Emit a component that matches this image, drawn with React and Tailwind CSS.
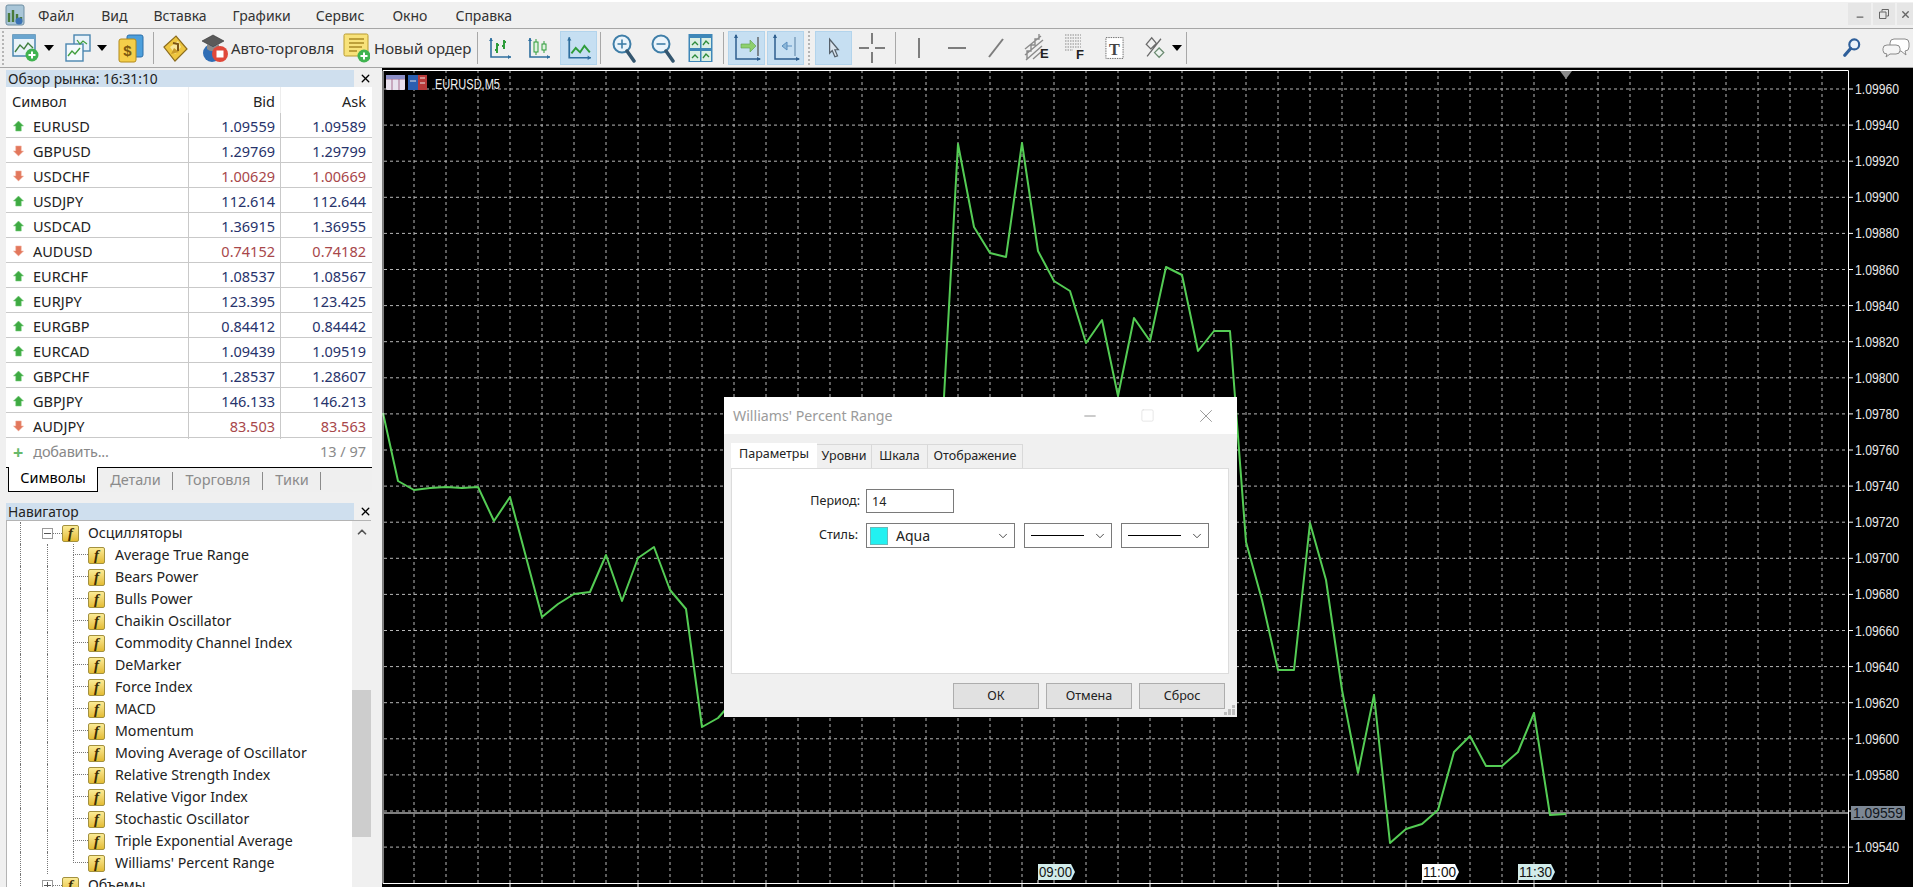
import React from 'react';
import { ChevronDown, ChevronUp, Minus, Square, X } from 'lucide-react';

const FONT = 'font-["Noto_Sans",sans-serif]';

const menuItems = [
  { label: 'Файл', cls: 'ml-[13px]' },
  { label: 'Вид', cls: 'ml-[27px]' },
  { label: 'Вставка', cls: 'ml-[26px]' },
  { label: 'Графики', cls: 'ml-[26px]' },
  { label: 'Сервис', cls: 'ml-[25px]' },
  { label: 'Окно', cls: 'ml-[28px]' },
  { label: 'Справка', cls: 'ml-[28px]' },
];

const quotes = [
  ['EURUSD', '1.09559', '1.09589', 'up', false],
  ['GBPUSD', '1.29769', '1.29799', 'down', false],
  ['USDCHF', '1.00629', '1.00669', 'down', true],
  ['USDJPY', '112.614', '112.644', 'up', false],
  ['USDCAD', '1.36915', '1.36955', 'up', false],
  ['AUDUSD', '0.74152', '0.74182', 'down', true],
  ['EURCHF', '1.08537', '1.08567', 'up', false],
  ['EURJPY', '123.395', '123.425', 'up', false],
  ['EURGBP', '0.84412', '0.84442', 'up', false],
  ['EURCAD', '1.09439', '1.09519', 'up', false],
  ['GBPCHF', '1.28537', '1.28607', 'up', false],
  ['GBPJPY', '146.133', '146.213', 'up', false],
  ['AUDJPY', '83.503', '83.563', 'down', true],
];

const indicators = [
  'Average True Range',
  'Bears Power',
  'Bulls Power',
  'Chaikin Oscillator',
  'Commodity Channel Index',
  'DeMarker',
  'Force Index',
  'MACD',
  'Momentum',
  'Moving Average of Oscillator',
  'Relative Strength Index',
  'Relative Vigor Index',
  'Stochastic Oscillator',
  'Triple Exponential Average',
  "Williams' Percent Range",
];

const pricePoints =
  '383,413 398,481 414,490 430,488 446,487 462,488 478,487 494,521 510,497 526,557 542,617 558,604 574,594 590,592 606,555 622,601 638,558 654,547 670,590 686,609 702,727 718,718 734,700 944,397 958,144 974,227 990,253 1006,257 1022,143 1038,251 1054,281 1070,291 1086,343 1102,320 1118,396 1134,318 1150,341 1166,267 1182,275 1198,351 1214,331 1230,331 1246,542 1262,600 1278,670 1294,670 1310,523 1326,580 1342,690 1358,773 1374,695 1390,843 1406,829 1422,824 1438,810 1454,752 1470,736 1486,766 1502,766 1518,752 1534,713 1550,815 1566,814';

const gridX = Array.from({ length: 45 }, (_, i) => 414 + i * 32);
const priceLabels = Array.from({ length: 22 }, (_, i) => ({
  y: 89 + i * 36.1,
  text: (1.0996 - i * 0.0002).toFixed(5),
}));
const bottomTicks = [510, 638, 766, 894, 1022, 1150, 1278, 1406, 1534, 1662, 1790];

const Axes = ({ children }) => (
  <svg viewBox="0 0 24 24" className="w-full h-full">
    <path d="M3 2v19h20" fill="none" stroke="#2f6f9f" strokeWidth="1.6" />
    <path d="M1 5l2-3 2 3zM20 19l3 2-3 2z" fill="#2f6f9f" />
    {children}
  </svg>
);

const NewChartIcon = () => (
  <svg viewBox="0 0 27 28" className="w-[27px] h-[28px]">
    <rect x="1" y="1" width="22" height="21" fill="#e9f2f9" stroke="#4a86b0" strokeWidth="1.5" />
    <rect x="1" y="1" width="22" height="4" fill="#6aa5cf" />
    <path d="M3 18l5-7 4 4 4-6 5 5" fill="none" stroke="#3f7f3f" strokeWidth="1.4" />
    <circle cx="20" cy="21" r="6.5" fill="#3fb34f" />
    <path d="M20 17.5v7M16.5 21h7" stroke="#fff" strokeWidth="2" />
  </svg>
);

const ProfilesIcon = () => (
  <svg viewBox="0 0 26 28" className="w-[26px] h-[28px]">
    <rect x="9" y="1" width="16" height="16" fill="#e9f2f9" stroke="#4a86b0" strokeWidth="1.4" />
    <rect x="1" y="10" width="17" height="17" fill="#f4f9fc" stroke="#4a86b0" strokeWidth="1.4" />
    <path d="M3 22l4-5 3 3 5-6" fill="none" stroke="#3f9f3f" strokeWidth="1.4" />
    <path d="M12 6l3 4 3-3 4 3" fill="none" stroke="#3f9f3f" strokeWidth="1.2" />
  </svg>
);

const MarketIcon = () => (
  <svg viewBox="0 0 26 30" className="w-[26px] h-[30px]">
    <rect x="9" y="2" width="16" height="22" rx="2" fill="#4c9fdc" stroke="#2c6fa8" />
    <rect x="1" y="6" width="17" height="23" rx="2" fill="#f5cf4a" stroke="#b38a1a" />
    <text x="9.5" y="23" textAnchor="middle" fontSize="15" fontFamily="Liberation Sans, sans-serif" fontWeight="700" fill="#7d5a10">$</text>
  </svg>
);

const EditorIcon = () => (
  <svg viewBox="0 0 27 28" className="w-[27px] h-[28px]">
    <path d="M2 13L14 2l11 13-12 12z" fill="#eec640" stroke="#8d6d1e" strokeWidth="1.2" />
    <path d="M8 13l8-6 3 6-6 7z" fill="#f8e69a" />
    <path d="M11 9l5 1v7" fill="none" stroke="#7b5414" strokeWidth="2" />
    <path d="M9 20l3-6 5 4" fill="#c99a2a" />
  </svg>
);

const AutoTradeIcon = () => (
  <svg viewBox="0 0 27 30" className="w-[27px] h-[30px]">
    <circle cx="11" cy="20" r="9" fill="#2f6db5" />
    <path d="M1 8l11-6 11 6-11 6z" fill="#5a5a5a" stroke="#333" strokeWidth="0.6" />
    <path d="M6 11v5c3 3 9 3 12 0v-5l-6 3z" fill="#8a8a8a" />
    <circle cx="19" cy="21" r="8" fill="#e0483a" />
    <rect x="15.5" y="17.5" width="7" height="7" fill="#fff" />
  </svg>
);

const NewOrderIcon = () => (
  <svg viewBox="0 0 27 30" className="w-[27px] h-[30px]">
    <rect x="1" y="1" width="24" height="22" rx="1.5" fill="#f8e27a" stroke="#b89a2e" />
    <path d="M6 6h15M6 10h15M6 14h13M6 18h8" stroke="#a98a26" strokeWidth="1.4" />
    <circle cx="21" cy="23" r="6.5" fill="#3fb34f" />
    <path d="M21 19.5v7M17.5 23h7" stroke="#fff" strokeWidth="2" />
  </svg>
);

const BarsIcon = () => (
  <Axes>
    <path d="M9 7v10M7 14h2M9 9h2M16 4v9M14 10h2M16 6h2" fill="none" stroke="#2e9c3a" strokeWidth="2" />
  </Axes>
);

const CandlesIcon = () => (
  <Axes>
    <rect x="7" y="6" width="4" height="10" fill="#dff3df" stroke="#2e9c3a" />
    <rect x="15" y="8" width="4" height="6" fill="#dff3df" stroke="#2e9c3a" />
    <path d="M9 3v3M9 16v3M17 5v3M17 14v3" stroke="#2e9c3a" />
  </Axes>
);

const LineIcon = () => (
  <Axes>
    <path d="M5 17l4-5 4 4 4-6 5 6" fill="none" stroke="#2e9c3a" strokeWidth="1.8" />
  </Axes>
);

const LensIcon = ({ plus }) => (
  <svg viewBox="0 0 25 30" className="w-[25px] h-[30px]">
    <circle cx="10" cy="11" r="8.5" fill="#eaf4fb" stroke="#3f7ea8" strokeWidth="2" />
    <path d="M15 18l7 10" stroke="#34566f" strokeWidth="3.5" strokeLinecap="round" />
    <path d="M5.5 11h9" stroke="#3f7ea8" strokeWidth="1.6" />
    {plus && <path d="M10 6.5v9" stroke="#3f7ea8" strokeWidth="1.6" />}
  </svg>
);

const TileIcon = () => (
  <svg viewBox="0 0 25 30" className="w-[25px] h-[30px]">
    <rect x="0.5" y="1" width="24" height="28" fill="#3f87b8" />
    <rect x="2" y="5" width="10" height="10" fill="#dcefe4" />
    <rect x="13.5" y="5" width="9.5" height="10" fill="#dcefe4" />
    <rect x="2" y="18" width="10" height="10" fill="#dcefe4" />
    <rect x="13.5" y="18" width="9.5" height="10" fill="#dcefe4" />
    <path d="M4 12l3-3 3 3M15 12l3-4 3 3M4 25l3-3 3 3M15 25l3-4 3 3" fill="none" stroke="#2e8c3a" strokeWidth="1.3" />
  </svg>
);

const ScrollIcon = ({ shift }) => (
  <svg viewBox="0 0 30 30" className="w-[30px] h-[30px]">
    <path d="M4 2v24h24" fill="none" stroke="#2f5f8f" strokeWidth="1.5" />
    <path d="M2 5l2-4 2 4zM25 24l4 2-4 2z" fill="#2f5f8f" />
    {shift ? (
      <>
        <path d="M24 4v19" stroke="#6a8fb0" strokeWidth="1.2" />
        <path d="M21 13h-5M16 9l-5 4 5 4z" fill="#8db8d8" stroke="#5a8fc0" />
      </>
    ) : (
      <>
        <path d="M26 4v19" stroke="#4a4a4a" strokeWidth="1.2" />
        <path d="M9 11h9v-4l6 6-6 6v-4H9z" fill="#8ed06e" stroke="#5fa04a" strokeWidth="0.6" />
      </>
    )}
  </svg>
);

const CursorIcon = () => (
  <svg viewBox="0 0 16 24" className="w-[14px] h-[22px]">
    <path d="M3 2l10 12-4 0 3 7-3 1-3-7-3 3z" fill="#d9e4ee" stroke="#55606a" strokeWidth="1.4" />
  </svg>
);

const CrossIcon = () => (
  <svg viewBox="0 0 26 30" className="w-[26px] h-[30px]">
    <path d="M13 0v11M13 19v11M0 15h10M16 15h10" stroke="#7d7d7d" strokeWidth="2" />
  </svg>
);

const FibIcon = () => (
  <svg viewBox="0 0 26 30" className="w-[26px] h-[30px]">
    <path d="M3 26V18h4v-6h4V6h4V1M1 16l16-13M1 22L19 7M2 27L18 13M9 26l8-7" fill="none" stroke="#8b8b8b" strokeWidth="1.4" />
    <text x="16" y="25" fontSize="13" fontWeight="700" fontFamily="Liberation Sans, sans-serif" fill="#222">E</text>
  </svg>
);

const FiboGridIcon = () => (
  <svg viewBox="0 0 22 30" className="w-[22px] h-[30px]">
    <path d="M1 2h16M1 5h16M1 8h16M1 11h16M1 14h16M1 17h8" stroke="#8a8a8a" strokeDasharray="1.5 1" />
    <text x="12" y="26" fontSize="13" fontWeight="700" fontFamily="Liberation Sans, sans-serif" fill="#222">F</text>
  </svg>
);

const TextToolIcon = () => (
  <svg viewBox="0 0 20 26" className="w-[19px] h-[26px]">
    <rect x="1" y="2" width="18" height="22" fill="#fff" stroke="#6a6a6a" strokeDasharray="1.5 1" />
    <text x="10" y="20" textAnchor="middle" fontSize="17" fontWeight="700" fontFamily="Liberation Serif, serif" fill="#444">T</text>
  </svg>
);

const ShapesIcon = () => (
  <svg viewBox="0 0 22 26" className="w-[21px] h-[24px]">
    <path d="M2 9l6-7 5 6-6 6zM3 22L18 3" fill="none" stroke="#6a6a6a" strokeWidth="1.4" />
    <path d="M11 18l5-5 5 5-5 5z" fill="#eef4f0" stroke="#6a8a70" strokeWidth="1.4" />
  </svg>
);

const Caret = ({ cls }) => (
  <span className={`w-0 h-0 border-x-[5px] border-x-transparent border-t-[6px] border-t-black ${cls}`} />
);

const Sep = ({ cls }) => <span className={`w-px h-[32px] bg-[#a8a8a8] ${cls}`} />;

const Grip = ({ cls }) => <span className={`w-[2px] h-[34px] border-l-2 border-dotted border-[#b5b5b5] ${cls}`} />;

const ActiveBtn = ({ cls, children }) => (
  <span className={`w-[37px] h-[34px] bg-[#c6dff2] border border-[#b3d4ec] flex items-center justify-center ${cls}`}>
    {children}
  </span>
);

const Toolbar = () => (
  <div className="h-[40px] shrink-0 flex items-center bg-[#f0f0f0] border-y border-[#a6a6a6] text-[15px] text-[#333]">
    <Grip cls="ml-[2px]" />
    <span className="ml-[8px] flex"><NewChartIcon /></span>
    <Caret cls="ml-[5px]" />
    <span className="ml-[11px] flex"><ProfilesIcon /></span>
    <Caret cls="ml-[6px]" />
    <span className="ml-[11px] flex"><MarketIcon /></span>
    <Sep cls="ml-[9px]" />
    <span className="ml-[8px] flex"><EditorIcon /></span>
    <span className="ml-[12px] flex"><AutoTradeIcon /></span>
    <span className="ml-[3px] w-[112px] tracking-[-0.1px] whitespace-nowrap">Авто-торговля</span>
    <span className="flex"><NewOrderIcon /></span>
    <span className="ml-[4px] w-[101px] whitespace-nowrap">Новый ордер</span>
    <Sep cls="ml-[2px]" />
    <span className="ml-[10px] w-[24px] h-[24px]"><BarsIcon /></span>
    <span className="ml-[15px] w-[24px] h-[24px]"><CandlesIcon /></span>
    <ActiveBtn cls="ml-[9px]"><span className="w-[26px] h-[26px]"><LineIcon /></span></ActiveBtn>
    <Sep cls="ml-[3px]" />
    <span className="ml-[11px] flex"><LensIcon plus /></span>
    <span className="ml-[14px] flex"><LensIcon /></span>
    <span className="ml-[12px] flex"><TileIcon /></span>
    <Sep cls="ml-[10px]" />
    <ActiveBtn cls="ml-[4px]"><ScrollIcon /></ActiveBtn>
    <ActiveBtn cls="ml-[2px]"><ScrollIcon shift /></ActiveBtn>
    <Grip cls="ml-[4px]" />
    <ActiveBtn cls="ml-[5px]"><CursorIcon /></ActiveBtn>
    <span className="ml-[7px] flex"><CrossIcon /></span>
    <Sep cls="ml-[10px]" />
    <span className="ml-[22px] w-[2px] h-[20px] bg-[#7d7d7d]" />
    <span className="ml-[28px] w-[18px] h-[2px] bg-[#7d7d7d]" />
    <svg viewBox="0 0 16 20" className="ml-[22px] w-[16px] h-[20px]">
      <path d="M1 19L15 1" stroke="#7d7d7d" strokeWidth="2" />
    </svg>
    <span className="ml-[20px] flex"><FibIcon /></span>
    <span className="ml-[14px] flex"><FiboGridIcon /></span>
    <span className="ml-[19px] flex"><TextToolIcon /></span>
    <span className="ml-[20px] flex"><ShapesIcon /></span>
    <Caret cls="ml-[7px]" />
    <Sep cls="ml-[4px]" />
    <svg viewBox="0 0 20 22" className="ml-auto w-[18px] h-[20px]">
      <circle cx="12.5" cy="7" r="5.5" fill="#eaf2fa" stroke="#2e5f9a" strokeWidth="2.4" />
      <path d="M8.5 11.5L2 19" stroke="#2e5f9a" strokeWidth="3.6" strokeLinecap="round" />
    </svg>
    <svg viewBox="0 0 28 22" className="ml-[21px] mr-[3px] w-[28px] h-[22px]">
      <path d="M12 2h11q4 0 4 4v4q0 4-4 4l1 4-5-4h-7q-4 0-4-4V6q0-4 4-4z" fill="#fff" stroke="#8a8a8a" />
      <path d="M5 8h9q4 0 4 3.500v2q0 3.500-4 3.500H8l-4 3 1-3q-4 0-4-3.500v-2Q1 8 5 8z" fill="#f5f5f5" stroke="#8a8a8a" />
    </svg>
  </div>
);

const MenuBar = () => (
  <div className="h-[28px] shrink-0 flex items-center bg-[#f0f0f0] border-t-2 border-white text-[14px] text-[#333]">
    <svg viewBox="0 0 20 22" className="ml-[5px] w-[20px] h-[22px]">
      <rect x="1" y="1" width="18" height="20" rx="2" fill="#a9c6d8" stroke="#6f8ea2" />
      <path d="M4 18V9M8 18V6M12 18v-8M16 18v-5" stroke="#4a7a3a" strokeWidth="2.4" />
      <circle cx="14" cy="17" r="3.500" fill="#3b72b5" />
    </svg>
    {menuItems.map(item => (
      <span key={item.label} className={item.cls}>{item.label}</span>
    ))}
    <div className="ml-auto self-start mt-px flex gap-[2px] text-[#666]">
      <span className="w-[23px] h-[22px] bg-[#e6e6e6] flex items-center justify-center pt-[6px]"><Minus size={10} strokeWidth={3} /></span>
      <span className="w-[22px] h-[22px] bg-[#e6e6e6] flex items-center justify-center">
        <svg viewBox="0 0 10 10" className="w-[10px] h-[10px]"><path d="M3 2.500V.5h6.500V7H7.500M.5 3h6.500v6.500H.5z" fill="none" stroke="#666" /></svg>
      </span>
      <span className="w-[16px] h-[22px] bg-[#e6e6e6] flex items-center justify-center"><X size={11} strokeWidth={3} /></span>
    </div>
  </div>
);

const TrendArrow = ({ dir }) => (
  <svg viewBox="0 0 12 12" className="ml-[7px] w-[11px] h-[12px] shrink-0">
    {dir === 'up' ? (
      <path d="M6 .5L11.500 6H9v5.500H3V6H.5z" fill="#3eaa42" stroke="#79d07e" strokeWidth="0.6" />
    ) : (
      <path d="M6 11.500L.5 6H3V.5h6V6h2.500z" fill="#e2775c" stroke="#f2b09e" strokeWidth="0.6" />
    )}
  </svg>
);

const PanelHeader = ({ title }) => (
  <div className="h-[17px] shrink-0 flex items-center">
    <div className="w-[348px] h-full bg-[#cfdfee] pl-[2px] flex items-center text-[13.8px] leading-none text-[#222] whitespace-nowrap">{title}</div>
    <X size={13} strokeWidth={2.5} className="ml-[5px] text-black" />
  </div>
);

const MarketWatch = () => (
  <div className="shrink-0">
    <PanelHeader title="Обзор рынка: 16:31:10" />
    <div className="w-[366px] bg-white text-[14.500px] text-[#222]">
      <div className="h-[26px] grid grid-cols-[182px_92px_92px] items-center">
        <span className="pl-[6px] pt-[2px]">Символ</span>
        <span className="text-right pr-[5px] border-l border-[#ededed] h-full leading-[28px]">Bid</span>
        <span className="text-right pr-[6px] border-l border-[#ededed] h-full leading-[28px]">Ask</span>
      </div>
      {quotes.map(([symbol, bid, ask, dir, red]) => (
        <div key={symbol} className="h-[25px] grid grid-cols-[182px_92px_92px] border-b border-[#c9c9c9]">
          <span className="flex items-center">
            <TrendArrow dir={dir} />
            <span className="ml-[9px] pt-[2px]">{symbol}</span>
          </span>
          <span className={`text-right pr-[5px] border-l border-[#c9c9c9] leading-[26px] ${red ? 'text-[#a8474a]' : 'text-[#27336b]'}`}>{bid}</span>
          <span className={`text-right pr-[6px] border-l border-[#c9c9c9] leading-[26px] ${red ? 'text-[#a8474a]' : 'text-[#27336b]'}`}>{ask}</span>
        </div>
      ))}
      <div className="h-[29px] pb-[2px] flex items-center text-[#888]">
        <span className="ml-[7px] text-[#67b96b] text-[18px] leading-none font-bold">+</span>
        <span className="ml-[10px] tracking-[-0.2px]">добавить...</span>
        <span className="ml-auto mr-[6px] text-[#8a8a8a]">13 / 97</span>
      </div>
      <div className="h-[25px] flex bg-[#efefef] text-[#8b8b8b] border-t border-black">
        <span className="ml-[2px] -mt-px w-[90px] h-[25px] pb-[2px] bg-white border-x border-b border-black text-black flex items-center justify-center">Символы</span>
        <span className="w-[75px] text-center leading-[22px] relative">Детали<span className="absolute right-0 top-[4px] w-px h-[18px] bg-[#8b8b8b]" /></span>
        <span className="w-[90px] text-center leading-[22px] relative">Торговля<span className="absolute right-0 top-[4px] w-px h-[18px] bg-[#8b8b8b]" /></span>
        <span className="w-[58px] text-center leading-[22px] relative">Тики<span className="absolute right-0 top-[4px] w-px h-[18px] bg-[#8b8b8b]" /></span>
      </div>
    </div>
  </div>
);

const FunctionIcon = () => (
  <span className="w-[17px] h-[17px] shrink-0 rounded-[2px] border border-[#a3913f] bg-linear-to-b from-[#fbeb94] to-[#e4bc30] flex items-center justify-center font-['Liberation_Serif',serif] italic font-bold text-[15px] leading-none text-[#3a2d05]">
    f
  </span>
);

const TreeGuide = ({ cls }) => <span className={`self-stretch border-l border-dotted border-[#777] ${cls}`} />;

const GroupRow = ({ label, expanded }) => (
  <div className="h-[22px] flex items-center">
    <TreeGuide cls="ml-[13px] w-[27px]" />
    <span className="relative self-stretch w-[15px] flex items-center">
      <span className="w-full border-t border-dotted border-[#777]" />
      <span className="absolute -left-[5px] top-[6px] w-[11px] h-[11px] bg-white border border-[#9a9a9a] flex items-center justify-center">
        <span className="w-[7px] h-px bg-[#555]" />
        {!expanded && <span className="absolute w-px h-[7px] bg-[#555]" />}
      </span>
    </span>
    <FunctionIcon />
    <span className="ml-[9px]">{label}</span>
  </div>
);

const LeafRow = ({ label, last }) => (
  <div className="h-[22px] flex items-center">
    <TreeGuide cls="ml-[13px] w-[27px]" />
    <TreeGuide cls="w-[26px]" />
    <span className="self-stretch w-[15px] flex flex-col">
      <span className="h-[11px] border-l border-b border-dotted border-[#777]" />
      {!last && <span className="flex-1 border-l border-dotted border-[#777]" />}
    </span>
    <FunctionIcon />
    <span className="ml-[10px] whitespace-nowrap">{label}</span>
  </div>
);

const Navigator = () => (
  <div className="mt-[11px] flex-1 min-h-0 flex flex-col">
    <PanelHeader title="Навигатор" />
    <div className="flex-1 min-h-0 w-[365px] flex border-l border-t border-[#b4b4b4]">
      <div className="flex-1 pt-px overflow-hidden bg-white text-[14.200px] text-[#222]">
        <GroupRow label="Осцилляторы" expanded />
        {indicators.map((name, i) => (
          <LeafRow key={name} label={name} last={i === indicators.length - 1} />
        ))}
        <GroupRow label="Объемы" />
      </div>
      <div className="w-[19px] bg-[#f0f0f0] flex flex-col">
        <span className="h-[22px] flex items-center justify-center text-[#555]"><ChevronUp size={14} strokeWidth={3} /></span>
        <span className="mt-[147px] h-[147px] bg-[#cdcdcd]" />
      </div>
    </div>
  </div>
);

const TimeTag = ({ x, text, light }) => (
  <g>
    <path d={`M${x} 864h33l4 8-4 8h-33z`} fill={light ? '#fff' : '#d2ecea'} />
    <path d={`M${x} 880v4`} stroke="#fff" />
    <text x={x + 1} y="877" fontSize="14" fontFamily="Liberation Sans, sans-serif" fill="#111" textLength="33" lengthAdjust="spacingAndGlyphs">{text}</text>
  </g>
);

const Chart = () => (
  <svg viewBox="382 68 1531 819" className="block w-full h-full">
    <rect x="382" y="68" width="1531" height="819" fill="#000" />
    {gridX.map(x => (
      <line key={x} x1={x} y1="70" x2={x} y2="883" stroke="#b8b8b8" strokeDasharray="3 3" />
    ))}
    {priceLabels.map(p => (
      <g key={p.text}>
        <line x1="384" y1={p.y} x2="1848" y2={p.y} stroke="#b8b8b8" strokeDasharray="3 3" />
        <line x1="1848" y1={p.y} x2="1853" y2={p.y} stroke="#fff" />
        <text x="1855" y={p.y + 5} fontSize="14" fontFamily="Liberation Sans, sans-serif" fill="#e8e8e8" textLength="44" lengthAdjust="spacingAndGlyphs">{p.text}</text>
      </g>
    ))}
    <line x1="384" y1="813" x2="1848" y2="813" stroke="#a8a8a8" strokeWidth="1.400" />
    <polyline points={pricePoints} fill="none" stroke="#54cc54" strokeWidth="2" strokeLinejoin="round" />
    <path d="M383 70.500h1465.500V883.500H383z" fill="none" stroke="#fff" />
    {bottomTicks.map(x => (
      <line key={x} x1={x} y1="883" x2={x} y2="887" stroke="#fff" />
    ))}
    <path d="M1560 71h12l-6 8z" fill="#8a8a8a" />
    <rect x="386" y="75" width="19" height="15" rx="1.500" fill="#e8e2ee" />
    <path d="M386 79h19M392 79v11M399 79v11" stroke="#a76f8f" />
    <rect x="386" y="75" width="19" height="4" fill="#8d8fc7" />
    <rect x="408" y="75" width="10" height="15" fill="#2b5fb0" />
    <rect x="418" y="75" width="9" height="15" fill="#b83a3a" />
    <path d="M410 81h6M420 78h5M420 83h5" stroke="#e8e8e8" />
    <text x="435" y="89" fontSize="14" fontFamily="Liberation Sans, sans-serif" fill="#f2f2f2" textLength="65" lengthAdjust="spacingAndGlyphs">EURUSD,M5</text>
    <TimeTag x={1038} text="09:00" />
    <TimeTag x={1422} text="11:00" light />
    <TimeTag x={1518} text="11:30" />
    <rect x="1851" y="806" width="54" height="14" fill="#7c8794" />
    <text x="1853" y="818" fontSize="14" fontFamily="Liberation Sans, sans-serif" fill="#11161c" textLength="50" lengthAdjust="spacingAndGlyphs">1.09559</text>
  </svg>
);

const DialogSelect = ({ cls, children }) => (
  <div className={`h-[25px] bg-white border border-[#7a7a7a] flex items-center ${cls}`}>
    {children}
    <ChevronDown size={14} strokeWidth={1.5} className="ml-auto mr-[4px] text-[#333]" />
  </div>
);

const DialogTab = ({ cls, children }) => (
  <span className={`h-[24px] bg-[#f0f0f0] border-t border-r border-[#d9d9d9] flex items-center justify-center ${cls}`}>{children}</span>
);

const DialogButton = ({ children }) => (
  <button className="w-[86px] h-[26px] bg-[#e1e1e1] border border-[#adadad] text-[12.500px] text-[#222]">{children}</button>
);

const Dialog = () => (
  <div className="absolute left-[342px] top-[329px] w-[513px] h-[320px] flex flex-col bg-[#f0f0f0] text-[12.500px] text-[#222]">
    <div className="h-[37px] shrink-0 bg-white flex items-center">
      <span className="ml-[9px] text-[14.200px] text-[#9b9b9b]">Williams' Percent Range</span>
      <Minus size={18} strokeWidth={1} className="ml-auto text-[#777]" />
      <Square size={15} strokeWidth={0.8} className="ml-[41px] text-[#cfcfcf]" />
      <X size={22} strokeWidth={0.8} className="ml-[40px] mr-[20px] text-[#777]" />
    </div>
    <div className="pt-[9px] pl-[7px] flex items-end shrink-0">
      <span className="w-[86px] h-[25px] bg-white flex items-center justify-center pb-[2px]">Параметры</span>
      <DialogTab cls="w-[55px]">Уровни</DialogTab>
      <DialogTab cls="w-[56px]">Шкала</DialogTab>
      <DialogTab cls="w-[95px]">Отображение</DialogTab>
    </div>
    <div className="ml-[7px] w-[498px] h-[206px] shrink-0 bg-white border border-[#dcdcdc] pt-[20px]">
      <div className="flex items-center">
        <span className="w-[128px] text-right">Период:</span>
        <input readOnly value="14" className="ml-[6px] w-[88px] h-[24px] border border-[#7a7a7a] px-[5px] outline-none" />
      </div>
      <div className="mt-[10px] flex items-center">
        <span className="w-[126px] text-right">Стиль:</span>
        <DialogSelect cls="ml-[8px] w-[149px]">
          <span className="ml-[3px] w-[18px] h-[18px] bg-[#22f1f1] border border-[#6bb]" />
          <span className="ml-[8px] text-[14px]">Aqua</span>
        </DialogSelect>
        <DialogSelect cls="ml-[9px] w-[88px]"><span className="ml-[6px] w-[53px] h-[1.500px] bg-black" /></DialogSelect>
        <DialogSelect cls="ml-[9px] w-[88px]"><span className="ml-[6px] w-[53px] h-[1.500px] bg-black" /></DialogSelect>
      </div>
    </div>
    <div className="mt-[9px] pr-[12px] flex justify-end gap-[7px]">
      <DialogButton>ОК</DialogButton>
      <DialogButton>Отмена</DialogButton>
      <DialogButton>Сброс</DialogButton>
    </div>
    <svg viewBox="0 0 11 11" className="absolute right-[2px] bottom-[2px] w-[11px] h-[11px]">
      <path d="M8 1h3v3H8zM4 5h3v3H4zM8 5h3v3H8zM0 8h3v3H0zM4 8h3v3H4zM8 8h3v3H8z" fill="#bdbdbd" />
    </svg>
  </div>
);

const App = () => (
  <div className={`w-[1913px] h-[887px] overflow-hidden flex flex-col bg-[#f0f0f0] ${FONT}`}>
    <MenuBar />
    <Toolbar />
    <div className="flex-1 min-h-0 flex">
      <div className="w-[382px] shrink-0 pl-[6px] pt-[2px] flex flex-col bg-[#f0f0f0]">
        <MarketWatch />
        <Navigator />
      </div>
      <div className="relative flex-1 min-w-0">
        <Chart />
        <Dialog />
      </div>
    </div>
  </div>
);

export default App;
